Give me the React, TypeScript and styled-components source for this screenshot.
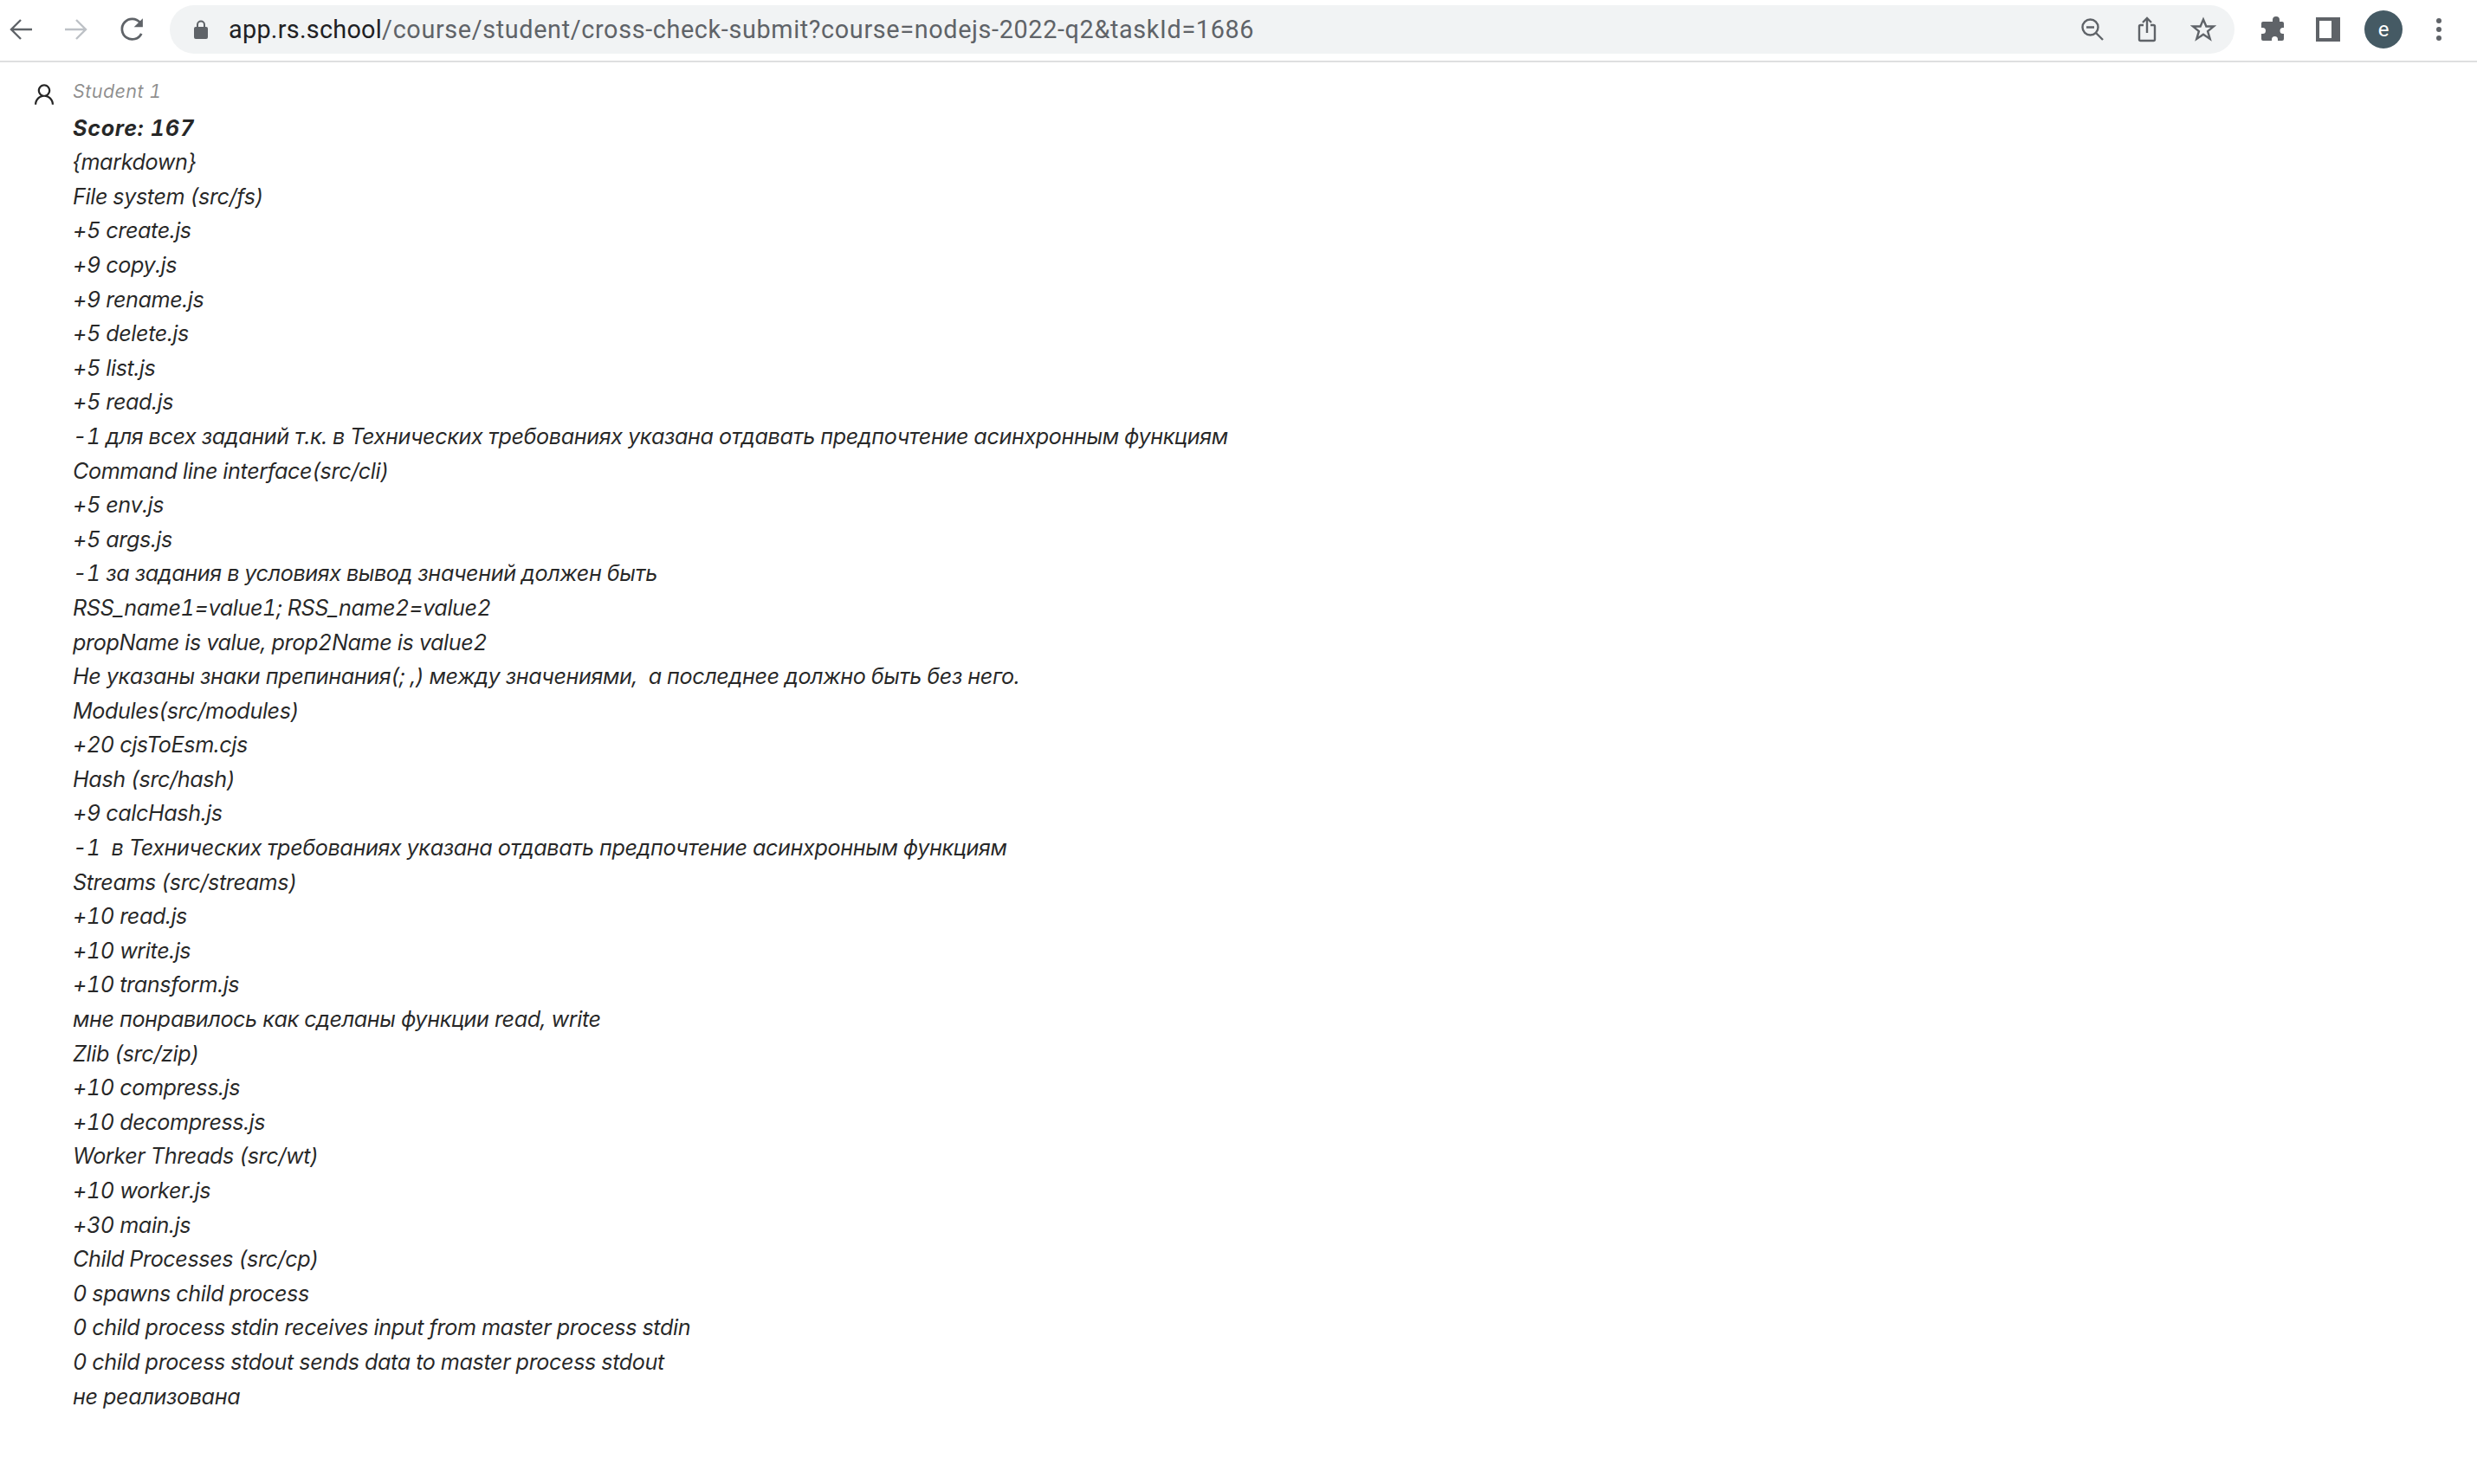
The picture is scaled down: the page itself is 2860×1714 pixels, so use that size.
import React from "react";
import styled, { createGlobalStyle } from "styled-components";
import { AiOutlineUser } from "react-icons/ai";

const lines = [
  "{markdown}",
  "File system (src/fs)",
  "+5 create.js",
  "+9 copy.js",
  "+9 rename.js",
  "+5 delete.js",
  "+5 list.js",
  "+5 read.js",
  "-1 для всех заданий т.к. в Технических требованиях указана отдавать предпочтение асинхронным функциям",
  "Command line interface(src/cli)",
  "+5 env.js",
  "+5 args.js",
  "-1 за задания в условиях вывод значений должен быть",
  "RSS_name1=value1; RSS_name2=value2",
  "propName is value, prop2Name is value2",
  "Не указаны знаки препинания(; ,) между значениями,  а последнее должно быть без него.",
  "Modules(src/modules)",
  "+20 cjsToEsm.cjs",
  "Hash (src/hash)",
  "+9 calcHash.js",
  "-1  в Технических требованиях указана отдавать предпочтение асинхронным функциям",
  "Streams (src/streams)",
  "+10 read.js",
  "+10 write.js",
  "+10 transform.js",
  "мне понравилось как сделаны функции read, write",
  "Zlib (src/zip)",
  "+10 compress.js",
  "+10 decompress.js",
  "Worker Threads (src/wt)",
  "+10 worker.js",
  "+30 main.js",
  "Child Processes (src/cp)",
  "0 spawns child process",
  "0 child process stdin receives input from master process stdin",
  "0 child process stdout sends data to master process stdout",
  "не реализована",
];

const GlobalStyle = createGlobalStyle`
  html, body {
    margin: 0;
    padding: 0;
    background: #fff;
  }
`;

const Page = styled.div`
  width: 2860px;
  height: 1714px;
  overflow: hidden;
  font-family: Inter, "Liberation Sans", sans-serif;
`;

const Toolbar = styled.header`
  box-sizing: border-box;
  height: 72px;
  padding: 6px 20px 8px 0;
  display: flex;
  align-items: center;
  border-bottom: 2px solid #dedfe0;
`;

const IconGroup = styled.div`
  display: flex;
  align-items: center;
  gap: 16px;
`;

const IconButton = styled.div`
  width: 48px;
  height: 48px;
  display: flex;
  align-items: center;
  justify-content: center;
  color: #5f6368;
`;

const AddressBar = styled.div`
  flex: 1;
  height: 56px;
  margin: 0 20px;
  padding: 0 12px 0 26px;
  display: flex;
  align-items: center;
  border-radius: 28px;
  background: #f1f3f4;
`;

const Lock = styled.svg`
  flex: none;
  margin-left: 2px;
`;

const Url = styled.div`
  flex: 1;
  margin-left: 24px;
  font-family: Roboto, "Liberation Sans", sans-serif;
  font-size: 28.8px;
  letter-spacing: 0.64px;
  color: #5f6368;
  white-space: nowrap;
`;

const Host = styled.span`
  letter-spacing: 0.28px;
  color: #202124;
`;

const Avatar = styled.div`
  width: 44px;
  height: 44px;
  border-radius: 50%;
  background: #455a64;
  color: #fff;
  font-family: Roboto, sans-serif;
  font-size: 24px;
  display: flex;
  align-items: center;
  justify-content: center;
`;

const Comment = styled.main`
  display: flex;
  padding: 14px 0 0 36px;
`;

const UserIcon = styled(AiOutlineUser)`
  flex: none;
  width: 30px;
  height: 30px;
  margin-top: 8px;
  color: #262626;
`;

const Body = styled.div`
  margin-left: 18px;
  font-style: italic;
  font-size: 25.2px;
  line-height: 39.6px;
  letter-spacing: -0.4px;
  font-variant-numeric: tabular-nums;
  color: rgba(0, 0, 0, 0.85);
`;

const Author = styled.div`
  font-size: 21.6px;
  line-height: 39.6px;
  letter-spacing: 0.4px;
  color: rgba(0, 0, 0, 0.45);
`;

const Score = styled.div`
  font-weight: 700;
  margin-top: 3px;
  letter-spacing: 0.7px;
`;

const Line = styled.div`
  white-space: pre;
`;

const Glyph = styled.svg<{ $size?: number }>`
  width: ${(p) => p.$size ?? 28}px;
  height: ${(p) => p.$size ?? 28}px;
  fill: none;
  stroke: currentColor;
  stroke-width: 2.4;
`;

const FadedButton = styled(IconButton)`
  color: #bdc1c6;
`;

export default function App() {
  return (
    <Page>
      <GlobalStyle />
      <Toolbar>
        <IconGroup>
          <IconButton>
            <Glyph viewBox="0 0 28 28">
              <path d="M27 14H3M14 3 3 14l11 11" />
            </Glyph>
          </IconButton>
          <FadedButton>
            <Glyph viewBox="0 0 28 28">
              <path d="M1 14h24M14 3l11 11-11 11" />
            </Glyph>
          </FadedButton>
          <IconButton>
            <Glyph viewBox="0 0 28 28" $size={30}>
              <path d="M24.5 18.5A11 11 0 1 1 23 6.5" strokeWidth="2.6" />
              <path d="M26 2v9.5h-9.5z" fill="currentColor" stroke="none" />
            </Glyph>
          </IconButton>
        </IconGroup>
        <AddressBar>
          <Lock width="16" height="22" viewBox="0 0 16 22" fill="#5f6368">
            <path d="M3 8V5.5a5 5 0 0 1 10 0V8h1a2 2 0 0 1 2 2v10a2 2 0 0 1-2 2H2a2 2 0 0 1-2-2V10a2 2 0 0 1 2-2zm2 0h6V5.5a3 3 0 0 0-6 0z" />
          </Lock>
          <Url>
            <Host>app.rs.school</Host>/course/student/cross-check-submit?course=nodejs-2022-q2&taskId=1686
          </Url>
          <IconGroup>
            <IconButton>
              <Glyph viewBox="0 0 28 28">
                <circle cx="11.5" cy="11.5" r="9" />
                <path d="M7 11.5h9M18 18l8 8" />
              </Glyph>
            </IconButton>
            <IconButton>
              <Glyph viewBox="0 0 28 32" $size={32}>
                <path d="M9 11H5.5A1.5 1.5 0 0 0 4 12.5v15A1.5 1.5 0 0 0 5.5 29h15a1.5 1.5 0 0 0 1.5-1.5v-15a1.5 1.5 0 0 0-1.5-1.5H17" />
                <path d="M13 20V3M8 8l5-5 5 5" />
              </Glyph>
            </IconButton>
            <IconButton>
              <Glyph viewBox="0 0 30 30" $size={30}>
                <path d="M15 3.5l3.4 8h8.6l-6.900 5.600 2.600 8.900L15 20.800 7.300 26l2.600-8.900L3 11.500h8.600z" />
              </Glyph>
            </IconButton>
          </IconGroup>
        </AddressBar>
        <IconGroup>
          <IconButton>
            <svg width="28" height="30" viewBox="0 0 28 30" fill="#5f6368">
              <path d="M8 6h5V4a4 4 0 0 1 8 0v2h3a2 2 0 0 1 2 2v5h-1a3.500 3.500 0 0 0 0 7h1v6a2 2 0 0 1-2 2h-5v-1.500a3.500 3.500 0 0 0-7 0V28H2a2 2 0 0 1-2-2v-6h1.500a3.500 3.500 0 0 0 0-7H0V8a2 2 0 0 1 2-2z" transform="translate(1 0)" />
            </svg>
          </IconButton>
          <IconButton>
            <svg width="28" height="28" viewBox="0 0 28 28" fill="#5f6368">
              <path fillRule="evenodd" d="M0 0h28v28H0zM4 4v20h14V4z" />
            </svg>
          </IconButton>
          <IconButton>
            <Avatar>e</Avatar>
          </IconButton>
          <IconButton>
            <svg width="8" height="28" viewBox="0 0 8 28" fill="#5f6368">
              <circle cx="4" cy="4" r="3" />
              <circle cx="4" cy="14" r="3" />
              <circle cx="4" cy="24" r="3" />
            </svg>
          </IconButton>
        </IconGroup>
      </Toolbar>
      <Comment>
        <UserIcon />
        <Body>
          <Author>Student 1</Author>
          <Score>Score: 167</Score>
          {lines.map((line, i) => (
            <Line key={i}>{line}</Line>
          ))}
        </Body>
      </Comment>
    </Page>
  );
}
